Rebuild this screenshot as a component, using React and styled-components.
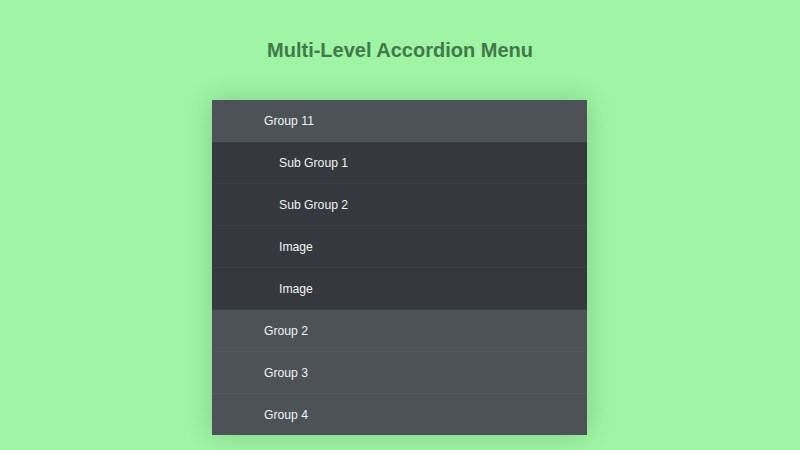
import React from 'react';
import styled, { createGlobalStyle } from 'styled-components';

const Global = createGlobalStyle`
  html, body {
    margin: 0;
    padding: 0;
    background: #a0f4a6;
    font-family: "Liberation Sans", Arial, sans-serif;
  }
`;

const Page = styled.div`
  display: flex;
  flex-direction: column;
  align-items: center;
  min-height: 450px;
`;

const Title = styled.h1`
  margin: 38px 0 38px;
  font-size: 20px;
  line-height: 24px;
  font-weight: bold;
  color: #3f7a48;
`;

const Menu = styled.ul`
  width: 375px;
  margin: 0 1px 0 0;
  padding: 0;
  list-style: none;
  box-shadow: 0 0 24px rgba(0, 80, 10, 0.22);
`;

const Row = styled.li`
  height: 41px;
  display: flex;
  align-items: center;
  padding-left: ${p => (p.sub ? 67 : 52)}px;
  background: ${p => (p.sub ? '#35383e' : '#4d5158')};
  border-bottom: 1px solid ${p => (p.sub ? '#3b3e44' : '#53575e')};
  color: #f0f2f4;
  font-size: 12.2px;
  &:last-child { border-bottom: none; }
`;

const items = [
  { label: 'Group 11' },
  { label: 'Sub Group 1', sub: true },
  { label: 'Sub Group 2', sub: true },
  { label: 'Image', sub: true },
  { label: 'Image', sub: true },
  { label: 'Group 2' },
  { label: 'Group 3' },
  { label: 'Group 4' },
];

const App = () => (
  <Page>
    <Global />
    <Title>Multi-Level Accordion Menu</Title>
    <Menu>
      {items.map((it, i) => (
        <Row key={i} sub={it.sub}>{it.label}</Row>
      ))}
    </Menu>
  </Page>
);

export default App;
